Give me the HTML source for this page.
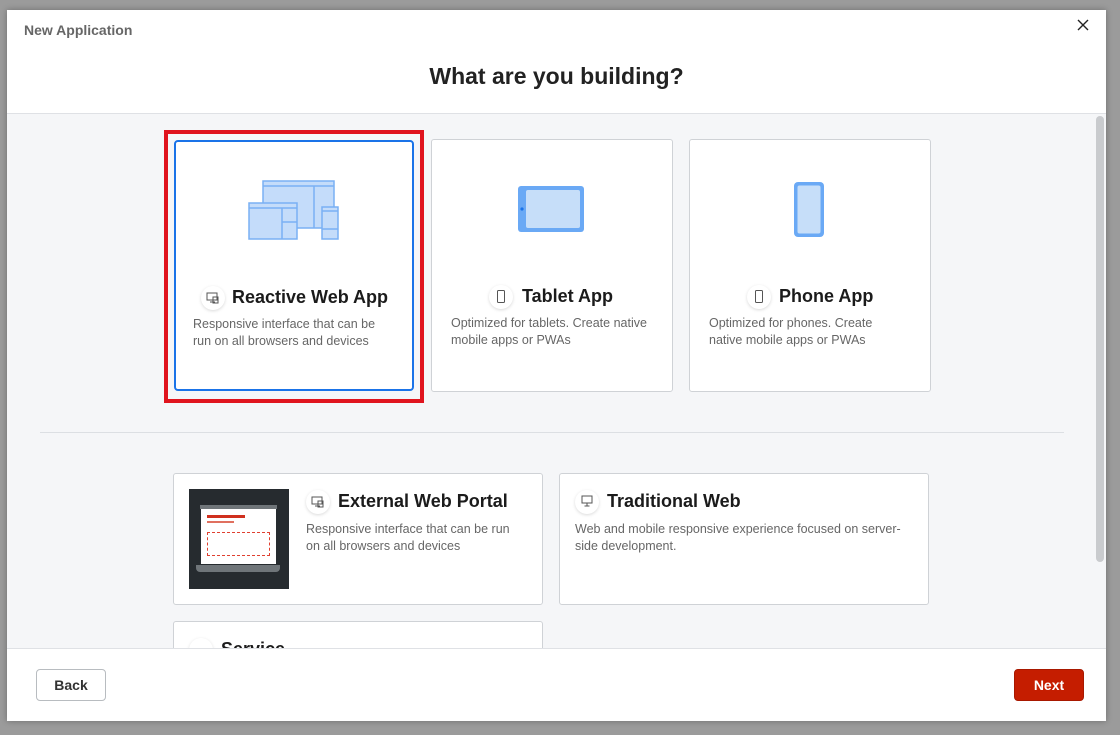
<!DOCTYPE html>
<html><head><style>
*{box-sizing:border-box;margin:0;padding:0}
body{width:1120px;height:735px;background:#9b9b9b;font-family:"Liberation Sans",sans-serif;position:relative;overflow:hidden}
.dlg{position:absolute;left:7px;top:10px;width:1099px;height:711px;background:#fff;box-shadow:0 0 6px rgba(0,0,0,.3)}
.hdr{position:absolute;left:0;top:0;width:100%;height:104px;border-bottom:1px solid #dfe1e5}
.body{position:absolute;left:0;top:104px;width:100%;height:534px;background:#f5f6f8;overflow:hidden}
.ftr{position:absolute;left:0;top:638px;width:100%;height:73px;border-top:1px solid #dfe1e5;background:#fff}
.card{position:absolute;background:#fff;border:1px solid #cfd2d6;border-radius:3px}
.ic{position:absolute;width:24px;height:24px;border-radius:50%;background:#fff;box-shadow:0 1px 3px rgba(0,0,0,.15)}
.t{position:absolute;font-size:18px;font-weight:bold;color:#1b1b1b;white-space:nowrap}
.d{position:absolute;font-size:12.5px;color:#666;line-height:17px}
.btn{position:absolute;top:20px;height:32px;border-radius:4px;font-size:14px;font-weight:bold;text-align:center;line-height:30px}
.a{position:absolute}
</style></head><body>
<div class="dlg">
 <div class="hdr">
  <div style="position:absolute;left:17px;top:12px;font-size:14px;font-weight:bold;color:#666">New Application</div>
  <svg style="position:absolute;left:1070px;top:9px" width="12" height="12"><path d="M1 1L11 11M11 1L1 11" stroke="#222" stroke-width="1.4"/></svg>
  <div style="position:absolute;left:0;width:1099px;top:53px;text-align:center;font-size:23px;font-weight:bold;color:#222">What are you building?</div>
 </div>
 <div class="body">
  <div style="position:absolute;left:157px;top:16px;width:260px;height:273px;border:4px solid #e0141e"></div>
  <div class="card" style="left:167px;top:26px;width:240px;height:251px;border:2px solid #1a73e8;border-radius:4px">
   <svg style="position:absolute;left:72px;top:37px" width="94" height="62" viewBox="0 0 94 62">
    <g fill="#c4dcfa" stroke="#7ab0f4" stroke-width="1.5">
     <rect x="15" y="2" width="71" height="47"/><line x1="15" y1="7" x2="86" y2="7"/><line x1="66" y1="7" x2="66" y2="49"/>
     <rect x="1" y="24" width="48" height="36"/><line x1="1" y1="29" x2="49" y2="29"/><line x1="34" y1="29" x2="34" y2="60"/><line x1="34" y1="43" x2="49" y2="43"/>
     <rect x="74" y="28" width="16" height="32"/><line x1="74" y1="32" x2="90" y2="32"/><line x1="74" y1="50" x2="90" y2="50"/>
    </g></svg>
   <div class="ic" style="left:25px;top:144px"></div>
   <svg style="position:absolute;left:30px;top:150px" width="14" height="12"><path d="M1 1h10v7H1zM4 10h5M7 5h5v6H7z" fill="none" stroke="#555" stroke-width="1"/></svg>
   <div class="t" style="left:56px;top:145px">Reactive Web App</div>
   <div class="d" style="left:17px;top:174px">Responsive interface that can be<br>run on all browsers and devices</div>
  </div>
  <div class="card" style="left:424px;top:25px;width:242px;height:253px">
   <svg style="position:absolute;left:85px;top:45px" width="68" height="48"><rect x="1" y="1" width="66" height="46" rx="3" fill="#6aa9f5"/><rect x="9" y="5" width="54" height="38" rx="2" fill="#c6def9"/><circle cx="5" cy="24" r="1.6" fill="#1a73e8"/></svg>
   <div class="ic" style="left:57px;top:145px"></div>
   <svg style="position:absolute;left:64px;top:150px" width="10" height="14"><rect x="1.5" y=".5" width="7" height="12" rx="1" fill="none" stroke="#555"/></svg>
   <div class="t" style="left:90px;top:146px">Tablet App</div>
   <div class="d" style="left:19px;top:175px">Optimized for tablets. Create native<br>mobile apps or PWAs</div>
  </div>
  <div class="card" style="left:682px;top:25px;width:242px;height:253px">
   <svg style="position:absolute;left:103px;top:41px" width="32" height="57"><rect x="1" y="1" width="30" height="55" rx="4" fill="#6aa9f5"/><rect x="4.5" y="4.5" width="23" height="48" rx="2" fill="#c6def9"/></svg>
   <div class="ic" style="left:57px;top:145px"></div>
   <svg style="position:absolute;left:64px;top:150px" width="10" height="14"><rect x="1.5" y=".5" width="7" height="12" rx="1" fill="none" stroke="#555"/></svg>
   <div class="t" style="left:89px;top:146px">Phone App</div>
   <div class="d" style="left:19px;top:175px">Optimized for phones. Create<br>native mobile apps or PWAs</div>
  </div>
  <div style="position:absolute;left:33px;top:318px;width:1024px;height:1px;background:#dcdfe3"></div>
  <div class="card" style="left:166px;top:359px;width:370px;height:132px">
   <div style="position:absolute;left:15px;top:15px;width:100px;height:100px;background:#262b2f">
    <div class="a" style="left:11px;top:16px;width:77px;height:4px;background:#6f7579"></div>
    <div class="a" style="left:12px;top:20px;width:75px;height:55px;background:#fff"></div>
    <div class="a" style="left:18px;top:26px;width:38px;height:3px;background:#d0301e"></div>
    <div class="a" style="left:18px;top:32px;width:27px;height:2px;background:#e0705f"></div>
    <div class="a" style="left:18px;top:43px;width:63px;height:24px;border:1px dashed #e04030"></div>
    <div class="a" style="left:7px;top:76px;width:84px;height:7px;background:#6f7579;border-radius:0 0 4px 4px"></div>
   </div>
   <div class="ic" style="left:132px;top:16px"></div>
   <svg style="position:absolute;left:137px;top:22px" width="14" height="12"><path d="M1 1h10v7H1zM4 10h5M7 5h5v6H7z" fill="none" stroke="#555" stroke-width="1"/></svg>
   <div class="t" style="left:164px;top:17px">External Web Portal</div>
   <div class="d" style="left:132px;top:47px">Responsive interface that can be run<br>on all browsers and devices</div>
  </div>
  <div class="card" style="left:552px;top:359px;width:370px;height:132px">
   <div class="ic" style="left:15px;top:16px"></div>
   <svg style="position:absolute;left:21px;top:21px" width="12" height="12"><path d="M1 1h10v7H1zM6 8v3M3.5 11h5" fill="none" stroke="#555"/></svg>
   <div class="t" style="left:47px;top:17px">Traditional Web</div>
   <div class="d" style="left:15px;top:47px">Web and mobile responsive experience focused on server-<br>side development.</div>
  </div>
  <div class="card" style="left:166px;top:507px;width:370px;height:60px">
   <div class="ic" style="left:15px;top:16px"></div>
   <div class="t" style="left:47px;top:17px">Service</div>
  </div>
  <div style="position:absolute;left:1089px;top:2px;width:8px;height:446px;background:#c9cbce;border-radius:4px"></div>
 </div>
 <div class="ftr">
  <div class="btn" style="left:29px;width:70px;border:1px solid #b8bcc0;color:#333;background:#fff">Back</div>
  <div class="btn" style="left:1007px;width:70px;background:#c51d00;color:#fff;border:1px solid #a81800">Next</div>
 </div>
</div>
</body></html>
